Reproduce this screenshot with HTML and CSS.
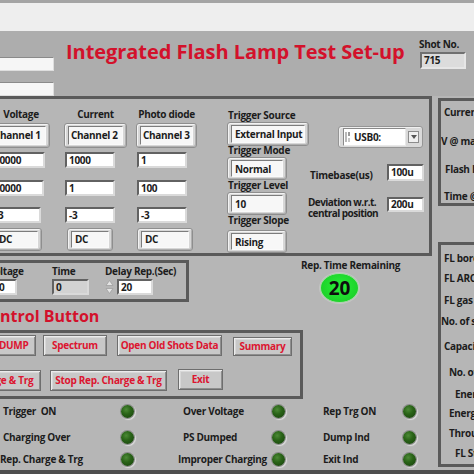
FILE: index.html
```html
<!DOCTYPE html>
<html>
<head>
<meta charset="utf-8">
<title>Integrated Flash Lamp Test Set-up</title>
<link rel="stylesheet" href="styles.css">
</head>
<body>
<div class="topstrip"></div>
<div class="lightband"></div>
<header class="header">
  <div class="hdr-boxes"><div class="strbox"></div><div class="strbox b2"></div></div>
  <h1 class="title">Integrated Flash Lamp Test Set-up</h1>
  <div class="shot"><div class="lbl">Shot No.</div><div class="shotval">715</div></div>
</header>
<main class="main">
  <section class="left">
    <div class="group g1">
      <div class="chcol c1">
        <div class="colhead">Voltage</div>
        <div class="ring btn-ch w63"><span>Channel 1</span></div>
        <div class="num r1 n1a">10000</div>
        <div class="num r2 n1b">10000</div>
        <div class="num r3 n1c">-3</div>
        <div class="ring dc d1"><span>DC</span></div>
      </div>
      <div class="chcol c2">
        <div class="colhead">Current</div>
        <div class="ring btn-ch w63"><span>Channel 2</span></div>
        <div class="num r1 nx">1000</div>
        <div class="num r2 nx">1</div>
        <div class="num r3 nx">-3</div>
        <div class="ring dc d2"><span>DC</span></div>
      </div>
      <div class="chcol c3">
        <div class="colhead">Photo diode</div>
        <div class="ring btn-ch w61"><span>Channel 3</span></div>
        <div class="num r1 nx">1</div>
        <div class="num r2 nx">100</div>
        <div class="num r3 nx">-3</div>
        <div class="ring dc d3"><span>DC</span></div>
      </div>
      <div class="trig">
        <div class="tlbl t1">Trigger Source</div>
        <div class="ring tsrc"><span>External Input</span></div>
        <div class="tlbl">Trigger Mode</div>
        <div class="ring tbox"><span>Normal</span></div>
        <div class="tlbl">Trigger Level</div>
        <div class="ring tbox"><span>10</span></div>
        <div class="tlbl">Trigger Slope</div>
        <div class="ring tbox tlast"><span>Rising</span></div>
      </div>
      <div class="scope">
        <div class="usb">
          <span class="usbfield"><svg class="usbicon" width="6" height="12" viewBox="0 0 6 12"><rect x="0" y="1" width="2" height="10" fill="#b9b9b9"/><rect x="3" y="1" width="2" height="4" fill="#9a9a9a"/><rect x="3" y="7" width="2" height="4" fill="#c8c8c8"/></svg>USB0:</span>
          <span class="usbdrop"><svg width="6" height="4" viewBox="0 0 6 4"><path d="M0 0 L6 0 L3 4 Z" fill="#555"/></svg></span>
        </div>
        <div class="srow timebase">
          <div class="slbl tb">Timebase(us)</div>
          <div class="num sbox">100u</div>
        </div>
        <div class="srow dev">
          <div class="slbl dv">Deviation w.r.t.<br>central position</div>
          <div class="num sbox s2">200u</div>
        </div>
      </div>
    </div>

    <div class="row2">
      <div class="group g2">
        <div class="field f1">
          <div class="flbl">Voltage</div>
          <div class="num fbox fv">0</div>
        </div>
        <div class="field f2">
          <div class="flbl">Time</div>
          <div class="num fbox ft">0</div>
        </div>
        <div class="field f3">
          <div class="flbl">Delay Rep.(Sec)</div>
          <div class="spinrow">
            <span class="spin"><svg width="9" height="16" viewBox="0 0 9 16"><path d="M4.5 1.5 L8 6.5 L1 6.5 Z" fill="#e4e4e4" stroke="#a0a0a0" stroke-width="0.8"/><path d="M4.5 14.5 L8 9.5 L1 9.5 Z" fill="#e4e4e4" stroke="#a0a0a0" stroke-width="0.8"/></svg></span>
            <div class="num fbox fd">20</div>
          </div>
        </div>
      </div>
      <div class="rep">
        <div class="replbl">Rep. Time Remaining</div>
        <div class="repval">20</div>
      </div>
    </div>

    <h2 class="ctitle">Control Button</h2>

    <div class="group g3">
      <div class="brow br1">
        <button class="cbtn b-dump">PS DUMP</button>
        <button class="cbtn b-spec">Spectrum</button>
        <button class="cbtn b-open">Open Old Shots Data</button>
        <button class="cbtn b-sum">Summary</button>
      </div>
      <div class="brow br2">
        <button class="cbtn b-start">Start Rep. Charge &amp; Trg</button>
        <button class="cbtn b-stop">Stop Rep. Charge &amp; Trg</button>
        <button class="cbtn b-exit">Exit</button>
      </div>
    </div>

    <div class="inds">
      <div class="il l1">Trigger&nbsp; ON</div><span class="led"></span>
      <div class="il l2">Over Voltage</div><span class="led"></span>
      <div class="il l3">Rep Trg ON</div><span class="led"></span>

      <div class="il l1">Charging Over</div><span class="led"></span>
      <div class="il l2">PS Dumped</div><span class="led"></span>
      <div class="il l3">Dump Ind</div><span class="led"></span>

      <div class="il l1 l1b">Rep. Charge &amp; Trg</div><span class="led"></span>
      <div class="il l2 l2b">Improper Charging</div><span class="led"></span>
      <div class="il l3">Exit Ind</div><span class="led"></span>
    </div>
  </section>

  <aside class="right">
    <div class="group rbox ra">
      <div class="rl a1">Current Peak</div>
      <div class="rl a2">V @ max Current</div>
      <div class="rl a3">Flash Intensity</div>
      <div class="rl a4">Time @ max</div>
    </div>
    <div class="group rbox rb">
      <div class="rl b1">FL bore dia</div>
      <div class="rl b2">FL ARC length</div>
      <div class="rl b3">FL gas pressure</div>
      <div class="rl b4">No. of shots</div>
      <div class="rl b5">Capacitance</div>
      <div class="rl b6">No. of caps</div>
      <div class="rl b7">Energy</div>
      <div class="rl b8">Energy density</div>
      <div class="rl b9">Throughput</div>
      <div class="rl b10">FL Status</div>
    </div>
  </aside>
</main>
<div class="bottomline"></div>
</body>
</html>
```

FILE: styles.css
```css
* { box-sizing: border-box; margin: 0; padding: 0; }
html, body { width: 474px; height: 474px; overflow: hidden; }
body {
  font-family: "Open Sans", "Noto Sans", sans-serif;
  font-weight: 700;
  font-size: 10px;
  letter-spacing: -0.3px;
  color: #1c1c1c;
  background: #b6b6b6;
  display: flex;
  flex-direction: column;
}
.topstrip { height: 3px; background: #a4a4a4; flex: none; }
.lightband { height: 28px; background: #eeeeee; flex: none; }

/* header */
.header { height: 65px; background: #adadad; display: flex; flex: none; }
.hdr-boxes { margin-left: -16px; width: 70px; padding-top: 26px; display: flex; flex-direction: column; gap: 3px; flex: none; }
.strbox { height: 16px; background: #f6f6f6; border: 1px solid #8a8a8a; border-right-color: #dedede; border-bottom-color: #dedede; }
.strbox.b2 { height: 15px; }
.title { margin-left: 12px; margin-top: 9px; width: 353px; flex: none; font-size: 20px; line-height: 24px; letter-spacing: -0.05px; color: #d3112b; font-weight: 700; white-space: nowrap; }
.shot { margin-top: 7px; display: flex; flex-direction: column; }
.shot .lbl { height: 12px; line-height: 12px; }
.shotval { margin-top: 2px; margin-left: 1px; width: 46px; height: 17px; background: #dcdcdc; border: 2px solid; border-color: #707070 #e6e6e6 #e6e6e6 #707070; line-height: 13px; padding-left: 2px; }

/* main */
.main { height: 374px; display: flex; flex: none; }
.left { margin-left: -30px; width: 462px; flex: none; display: flex; flex-direction: column; }
.group { border: 3px solid #5a5a5a; overflow: hidden; flex: none; }

/* group 1 */
.g1 { height: 160px; display: flex; padding-left: 14px; }
.chcol { display: flex; flex-direction: column; flex: none; }
.c1 { width: 63px; }
.c2 { width: 63px; margin-left: 14px; }
.c3 { width: 61px; margin-left: 9px; }
.colhead { margin-top: 9px; height: 12px; line-height: 12px; text-align: center; white-space: nowrap; }
.c1 .colhead { padding-left: 5px; }

.ring {
  display: block;
  background: #d7d7d7;
  border: 1px solid #8e8e8e;
  border-radius: 3px;
  padding: 2px 3px;
  box-shadow: inset 1px 1px 0 #f3f3f3, inset -1px -1px 0 #b0b0b0;
  white-space: nowrap;
  overflow: hidden;
}
.ring span {
  display: block;
  height: 100%;
  background: #f7f7f7;
  border: 1px solid;
  border-color: #7c7c7c #fafafa #fafafa #7c7c7c;
  padding-left: 2px;
  overflow: hidden;
}
.btn-ch { margin-top: 3px; height: 25px; }
.btn-ch span { line-height: 17px; }
.w63 { width: 63px; }
.w61 { width: 61px; }

.num {
  background: #ffffff;
  border: 2px solid;
  border-color: #626262 #dadada #dadada #626262;
  height: 16px;
  line-height: 12px;
  padding-left: 2px;
  white-space: nowrap;
  overflow: hidden;
}
.r1 { margin-top: 4px; }
.r2 { margin-top: 12px; }
.r3 { margin-top: 11px; }
.n1a { margin-left: 3px; width: 55px; }
.n1b { margin-left: 3px; width: 54px; }
.n1c { margin-left: 4px; width: 50px; }
.nx { margin-left: 1px; width: 50px; }

.dc { margin-top: 5px; height: 23px; }
.dc span { line-height: 15px; padding-left: 3px; }
.d1 { margin-left: 4px; width: 51px; }
.d2 { margin-left: 3px; width: 46px; }
.d3 { margin-left: 1px; width: 56px; }

/* trigger column */
.trig { width: 82px; margin-left: 30px; display: flex; flex-direction: column; flex: none; }
.tlbl { height: 11px; line-height: 11px; white-space: nowrap; padding-left: 1px; }
.t1 { margin-top: 10px; height: 12px; line-height: 12px; }
.tsrc { margin-top: 1px; height: 25px; width: 82px; margin-bottom: -1px; }
.tsrc span { line-height: 17px; padding-left: 3px; }
.tbox { margin-top: 1px; height: 24px; width: 60px; }
.tbox span { line-height: 16px; padding-left: 3px; }
.tlast { margin-top: 4px; }

/* scope area */
.scope { width: 121px; margin-left: -1px; display: flex; flex-direction: column; flex: none; }
.usb {
  margin-top: 27px; margin-left: 30px; width: 85px; height: 22px;
  display: flex; align-items: center;
  background: #d9d9d9; border: 1px solid #959595; border-radius: 3px;
  padding: 0 3px 0 4px;
  box-shadow: inset 1px 1px 0 #f0f0f0;
}
.usbfield {
  flex: 1; height: 18px; background: #fff;
  border: 1px solid; border-color: #8a8a8a #e8e8e8 #e8e8e8 #8a8a8a;
  display: flex; align-items: center; padding-left: 1px; line-height: 14px;
}
.usbicon { margin-right: 3px; }
.usbdrop {
  width: 11px; height: 12px; margin-left: 2px;
  border: 1px solid #8c8c8c; background: #f0f0f0;
  display: flex; align-items: center; justify-content: center;
}
.srow { display: flex; align-items: flex-start; }
.timebase { margin-top: 16px; }
.dev { margin-top: 16px; }
.slbl { width: 79px; flex: none; white-space: nowrap; }
.tb { margin-top: 5px; padding-left: 2px; line-height: 12px; }
.dv { line-height: 11px; letter-spacing: -0.55px; }
.sbox { width: 37px; height: 17px; line-height: 13px; }
.s2 { height: 15px; line-height: 11px; }

/* row 2 */
.row2 { margin-top: 4px; height: 42px; display: flex; flex: none; }
.g2 { width: 219px; height: 42px; display: flex; padding-left: 13px; padding-top: 2px; }
.field { display: flex; flex-direction: column; flex: none; }
.flbl { height: 12px; line-height: 12px; white-space: nowrap; }
.fbox { margin-top: 2px; height: 16px; }
.f1 { width: 31px; }
.f1 .flbl { padding-left: 2px; }
.fv { margin-left: 9px; width: 22px; }
.f2 { width: 37px; margin-left: 35px; }
.ft { width: 37px; background: #d2d2d2; }
.f3 { margin-left: 16px; }
.spinrow { display: flex; align-items: flex-end; }
.spin { width: 10px; height: 16px; margin-top: 2px; display: block; }
.fd { margin-left: 2px; width: 36px; }

.rep { margin-left: 112px; margin-top: -1px; display: flex; flex-direction: column; flex: none; }
.replbl { height: 12px; line-height: 12px; white-space: nowrap; }
.repval {
  margin-top: 2px; margin-left: 19px;
  width: 39px; height: 30px; border-radius: 50%;
  background: radial-gradient(ellipse at 50% 45%, #2cf03a 0%, #1ed82c 60%, #22c02c 100%);
  border: 1px solid #a8dca8;
  box-shadow: 0 0 0 1px #c4c4c4;
  font-size: 19px; line-height: 28px; letter-spacing: 0; text-align: center; color: #0e0e0e;
}

.ctitle { margin-top: 4px; margin-left: 10px; height: 20px; font-size: 16px; line-height: 20px; letter-spacing: 0; color: #d3112b; font-weight: 700; white-space: nowrap; flex: none; }

/* group 3 */
.g3 { margin-top: 4px; width: 333px; height: 69px; padding-top: 2px; }
.brow { display: flex; align-items: flex-start; padding-left: 5px; }
.br2 { margin-top: 14px; }
.cbtn {
  height: 21px; flex: none;
  font-family: "Open Sans", "Noto Sans", sans-serif;
  font-weight: 700; font-size: 10px; letter-spacing: -0.3px; color: #dc1530;
  background: #c8c8c8;
  border: 1px solid #6e6e6e;
  box-shadow: inset 1px 1px 0 #ececec, inset -1px -1px 0 #8e8e8e, inset 2px 2px 0 #d8d8d8;
  line-height: 19px; text-align: center; white-space: nowrap; overflow: hidden;
}
.b-dump { width: 58px; }
.b-spec { width: 64px; margin-left: 7px; }
.b-open { width: 105px; margin-left: 10px; }
.b-sum { width: 59px; margin-left: 11px; margin-top: 2px; height: 19px; line-height: 17px; }
.b-start { width: 124px; margin-left: -61px; }
.b-stop { width: 117px; margin-left: 9px; }
.b-exit { width: 45px; margin-left: 11px; margin-top: -1px; }

/* indicators */
.inds {
  margin-top: -1px; height: 70px; flex: none;
  display: grid;
  grid-template-columns: 151px 13px 138px 13px 118px 13px;
  grid-template-rows: 26px 26px 18px;
  align-items: center;
}
.il { white-space: nowrap; line-height: 12px; }
.l1 { padding-left: 33px; }
.l1b { padding-left: 30px; }
.l2 { padding-left: 49px; }
.l2b { padding-left: 44px; }
.l3 { padding-left: 38px; }
.led {
  display: block; width: 13px; height: 13px; border-radius: 50%;
  background: radial-gradient(circle at 40% 35%, #4c8a36 0%, #2a6418 40%, #153d0b 100%);
  box-shadow: 0 0 0 1px #8a8a8a, 1px 1px 1px 1px #dcdcdc;
}

/* right column */
.right { margin-left: 6px; width: 100px; flex: none; display: flex; flex-direction: column; }
.rbox { width: 100px; }
.ra { margin-top: 2px; height: 108px; }
.rb { margin-top: 36px; height: 225px; }
.rl { height: 12px; line-height: 12px; white-space: nowrap; }
.a1 { margin-top: 5px; padding-left: 3px; }
.a2 { margin-top: 17px; padding-left: 0; }
.a3 { margin-top: 16px; padding-left: 4px; }
.a4 { margin-top: 15px; padding-left: 3px; }
.b1 { margin-top: 7px; padding-left: 3px; }
.b2 { margin-top: 8px; padding-left: 3px; }
.b3 { margin-top: 10px; padding-left: 3px; }
.b4 { margin-top: 9px; padding-left: 0; }
.b5 { margin-top: 13px; padding-left: 3px; }
.b6 { margin-top: 14px; padding-left: 8px; }
.b7 { margin-top: 10px; padding-left: 14px; }
.b8 { margin-top: 7px; padding-left: 8px; }
.b9 { margin-top: 8px; padding-left: 8px; }
.b10 { margin-top: 8px; padding-left: 14px; }

.bottomline { height: 4px; background: #4e4e4e; flex: none; }
```
